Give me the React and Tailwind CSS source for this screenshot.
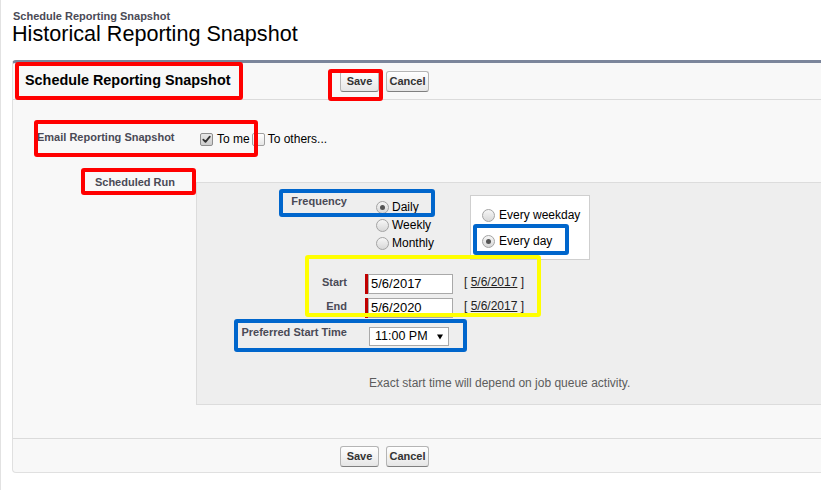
import React from "react";

const Radio = ({ checked }) => (
  <span className="relative inline-block h-[13px] w-[13px] shrink-0 rounded-full border border-[#a3a3a3] bg-linear-to-b from-[#f6f6f6] to-[#d8d8d8]">
    {checked && (
      <span className="absolute left-[3px] top-[3px] h-[5px] w-[5px] rounded-full bg-[#555555]" />
    )}
  </span>
);

const Checkbox = ({ checked }) =>
  checked ? (
    <span className="relative inline-block h-[13px] w-[13px] shrink-0 rounded-[2px] border border-[#8e8e8e] bg-linear-to-b from-[#e8e8e8] to-[#cdcdcd]">
      <svg viewBox="0 0 11 11" className="absolute left-0 top-0 h-[11px] w-[11px]">
        <path d="M2.3 5.6 L4.5 7.9 L8.8 2.6" fill="none" stroke="#333" strokeWidth="1.8" strokeLinecap="round" strokeLinejoin="round" />
      </svg>
    </span>
  ) : (
    <span className="inline-block h-[13px] w-[13px] shrink-0 rounded-[2px] border border-[#a0a0a0] bg-linear-to-b from-white to-[#e6e6e6]" />
  );

const Btn = ({ children, w }) => (
  <button
    className={`h-[21px] ${w} rounded-[3px] border border-[#b5b5b5] border-b-[#7f7f7f] bg-linear-to-b from-white to-[#e6e6e6] text-[11px] font-bold leading-none text-[#333333]`}
  >
    {children}
  </button>
);

const Buttons = () => (
  <div className="flex gap-[7px]">
    <Btn w="w-[39px]">Save</Btn>
    <Btn w="w-[43px]">Cancel</Btn>
  </div>
);

const Label = ({ children, className = "" }) => (
  <div className={`text-[11px] font-bold leading-[14px] text-[#4a4a56] ${className}`}>{children}</div>
);

const RadioRow = ({ checked, children, gap = "gap-[3px]", h = "h-[18px]" }) => (
  <div className={`flex ${h} items-center ${gap} text-[12px] leading-[16px] text-black`}>
    <Radio checked={checked} />
    <span>{children}</span>
  </div>
);

const DateField = ({ value }) => (
  <div className="flex items-start">
    <div className="h-[20px] w-[3px] bg-[#c00000]" />
    <div className="h-[20px] w-[85px] border border-[#a9a9a9] bg-white pl-[2px] text-[13px] leading-[18px] text-black">
      {value}
    </div>
    <span className="ml-[11px] text-[12px] leading-[16px] text-[#222222]">
      [ <span className="underline">5/6/2017</span> ]
    </span>
  </div>
);

const Box = ({ className }) => (
  <div className={`pointer-events-none absolute rounded-[3px] border-[4px] ${className}`} />
);

export default function App() {
  return (
    <div className="relative h-[490px] w-[821px] overflow-hidden bg-white font-['Liberation_Sans',Arial,sans-serif] text-black">
      <div className="absolute left-0 top-0 h-full w-px bg-[#e2e2e2]" />

      <div className="pl-[13px] pt-[10px] text-[11px] font-bold leading-[13px] text-[#4a4a56]">
        Schedule Reporting Snapshot
      </div>
      <div className="pl-[12px] text-[21.6px] leading-[21px] text-black">Historical Reporting Snapshot</div>

      <div className="ml-[12px] mt-[16px] w-[830px] rounded-tl-[4px] rounded-bl-[4px] border-b border-l border-t-[3px] border-[#e0e0e0] border-t-[#7b859b] bg-[#f8f8f8]">
        {/* header */}
        <div className="flex h-[37px] items-center border-b border-[#dbdbdb]">
          <div className="w-[327px] pl-[12px] text-[14.4px] font-bold text-black">Schedule Reporting Snapshot</div>
          <Buttons />
        </div>

        {/* email row */}
        <div className="flex items-start pt-[30px]">
          <Label className="w-[187px] pl-[24px]">Email Reporting Snapshot</Label>
          <div className="flex h-[18px] items-center text-[12px] leading-[16px] text-black">
            <Checkbox checked />
            <span className="ml-[4px]">To me</span>
            <span className="ml-[2px] flex">
              <Checkbox />
            </span>
            <span className="ml-[3px]">To others...</span>
          </div>
        </div>

        {/* scheduled run */}
        <div className="mt-[27px] flex items-start">
          <Label className="w-[183px] shrink-0 pr-[21px] text-right">Scheduled Run</Label>
          <div className="mt-[7px] flex-1 border-b border-l border-t border-[#dcdcdc] bg-[#eeeeee] pb-[13px] pt-[11px]">
            {/* frequency */}
            <div className="flex items-start">
              <Label className="w-[168px] shrink-0 pr-[18px] text-right">Frequency</Label>
              <div className="mt-[4px] w-[105px] shrink-0 pl-[11px]">
                <RadioRow checked>Daily</RadioRow>
                <RadioRow>Weekly</RadioRow>
                <RadioRow>Monthly</RadioRow>
              </div>
              <div className="mt-[1px] flex h-[65px] w-[120px] flex-col gap-[6px] border border-[#cfcfcf] bg-white pl-[11px] pt-[9px]">
                <RadioRow h="h-[20px]" gap="gap-[4px]">Every weekday</RadioRow>
                <RadioRow h="h-[20px]" gap="gap-[4px]" checked>
                  Every day
                </RadioRow>
              </div>
            </div>

            {/* start */}
            <div className="mt-[14px] flex items-start">
              <Label className="w-[168px] shrink-0 pr-[18px] pt-[1px] text-right">Start</Label>
              <DateField value="5/6/2017" />
            </div>

            {/* end */}
            <div className="mt-[4px] flex items-start">
              <Label className="w-[168px] shrink-0 pr-[18px] pt-[1px] text-right">End</Label>
              <DateField value="5/6/2020" />
            </div>

            {/* preferred start time */}
            <div className="mt-[7px] flex items-start">
              <Label className="w-[168px] shrink-0 pr-[18px] text-right">Preferred Start Time</Label>
              <div className="ml-[4px] mt-[2px] flex h-[19px] w-[80px] items-center justify-between border border-[#a9a9a9] bg-white pl-[5px] pr-[5px] text-[12.5px] leading-none text-black">
                <span>11:00 PM</span>
                <svg viewBox="0 0 6 6" className="h-[6px] w-[6px]">
                  <path d="M0 0.5 L6 0.5 L3 5.5 Z" fill="#000" />
                </svg>
              </div>
            </div>

            <div className="mt-[29px] pl-[172px] text-[12px] leading-[16px] text-[#5c5c5c]">
              Exact start time will depend on job queue activity.
            </div>
          </div>
        </div>

        {/* bottom buttons */}
        <div className="mt-[33px] flex h-[34px] items-start border-t border-[#dbdbdb] pt-[7px]">
          <div className="w-[327px]" />
          <Buttons />
        </div>
      </div>

      {/* annotation boxes */}
      <Box className="left-[15px] top-[62px] h-[38px] w-[228px] border-[#ff0000]" />
      <Box className="left-[328px] top-[69px] h-[32px] w-[55px] border-[#ff0000]" />
      <Box className="left-[34px] top-[120px] h-[37px] w-[224px] border-[#ff0000]" />
      <Box className="left-[81px] top-[168px] h-[27px] w-[115px] border-[#ff0000]" />
      <Box className="left-[279px] top-[189px] h-[28px] w-[156px] border-[#0066cc]" />
      <Box className="left-[473px] top-[224px] h-[31px] w-[96px] border-[#0066cc]" />
      <Box className="left-[234px] top-[319px] h-[33px] w-[233px] border-[#0066cc]" />
      <Box className="left-[305px] top-[255px] h-[62px] w-[236px] border-[#ffff00]" />
    </div>
  );
}
